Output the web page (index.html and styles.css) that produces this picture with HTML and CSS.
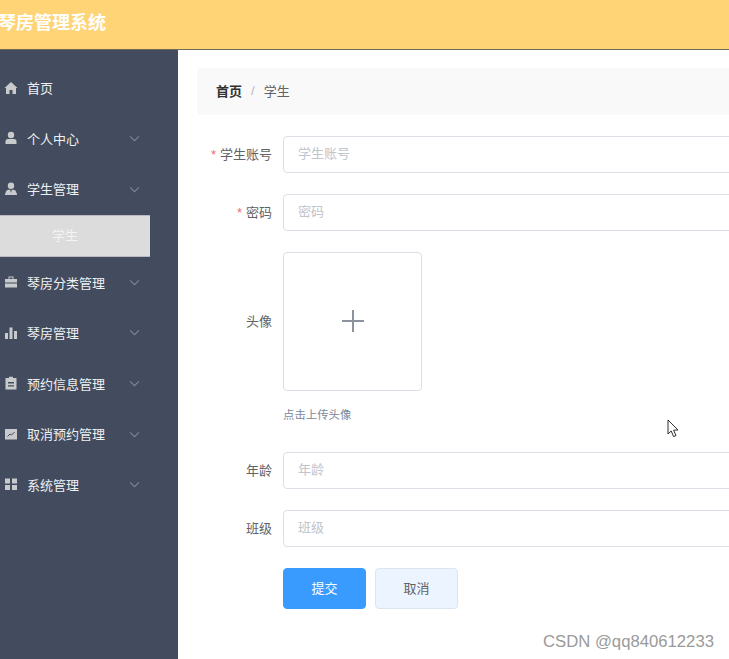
FILE: index.html
```html
<!DOCTYPE html>
<html lang="zh-CN">
<head>
    <meta charset="UTF-8">
    <meta name="viewport" content="width=device-width, initial-scale=1.0">
    <title>琴房管理系统</title>
    <link rel="stylesheet" href="styles.css">
</head>
<body>
    <header class="topbar">
        <h1 class="logo">琴房管理系统</h1>
    </header>

    <div class="layout">
        <aside class="sidebar">
            <ul class="menu">
                <li class="menu-item">
                    <svg class="menu-icon" viewBox="0 0 14 14"><path d="M7 1 L13.5 7 L12 7 L12 13 L8.5 13 L8.5 9 L5.5 9 L5.5 13 L2 13 L2 7 L0.5 7 Z"/></svg>
                    <span class="menu-text">首页</span>
                </li>
                <li class="menu-item">
                    <svg class="menu-icon" viewBox="0 0 14 14"><circle cx="7" cy="4" r="3.2"/><path d="M1.5 13 V10.5 Q1.5 8 4 8 H10 Q12.5 8 12.5 10.5 V13 Z"/></svg>
                    <span class="menu-text">个人中心</span>
                    <svg class="arrow" viewBox="0 0 10 6"><path d="M1 1 L5 5 L9 1"/></svg>
                </li>
                <li class="menu-item">
                    <svg class="menu-icon" viewBox="0 0 14 14"><circle cx="7" cy="3.8" r="3.2"/><path d="M0.8 13 L2 9.5 Q2.6 7.8 4.5 7.8 L6.2 7.8 L7 11 L7.8 7.8 L9.5 7.8 Q11.4 7.8 12 9.5 L13.2 13 Z"/></svg>
                    <span class="menu-text">学生管理</span>
                    <svg class="arrow" viewBox="0 0 10 6"><path d="M1 1 L5 5 L9 1"/></svg>
                </li>
                <li class="submenu-item">学生</li>
                <li class="menu-item">
                    <svg class="menu-icon" viewBox="0 0 14 14"><path d="M4.5 4 V1.5 H9.5 V4 H8.5 V2.5 H5.5 V4 Z"/><path d="M1 4 H13 V7.5 H1 Z"/><path d="M1 8.5 H13 V12.5 H1 Z"/></svg>
                    <span class="menu-text">琴房分类管理</span>
                    <svg class="arrow" viewBox="0 0 10 6"><path d="M1 1 L5 5 L9 1"/></svg>
                </li>
                <li class="menu-item">
                    <svg class="menu-icon" viewBox="0 0 14 14"><path d="M1 7 H4 V13 H1 Z"/><path d="M5.5 1.5 H8.5 V13 H5.5 Z"/><path d="M10 5 H13 V13 H10 Z"/></svg>
                    <span class="menu-text">琴房管理</span>
                    <svg class="arrow" viewBox="0 0 10 6"><path d="M1 1 L5 5 L9 1"/></svg>
                </li>
                <li class="menu-item">
                    <svg class="menu-icon" viewBox="0 0 14 14"><path fill-rule="evenodd" d="M5 0.8 H9 V2 H12.5 V13.5 H1.5 V2 H5 Z M4 6 V7.4 H10 V6 Z M4 9.2 V10.6 H10 V9.2 Z"/></svg>
                    <span class="menu-text">预约信息管理</span>
                    <svg class="arrow" viewBox="0 0 10 6"><path d="M1 1 L5 5 L9 1"/></svg>
                </li>
                <li class="menu-item">
                    <svg class="menu-icon" viewBox="0 0 14 14"><path d="M1 2 H13 V12.5 H1 Z"/><path class="icon-cut" d="M3.5 9.5 L6 7 L7.5 8 L10.5 5"/></svg>
                    <span class="menu-text">取消预约管理</span>
                    <svg class="arrow" viewBox="0 0 10 6"><path d="M1 1 L5 5 L9 1"/></svg>
                </li>
                <li class="menu-item">
                    <svg class="menu-icon" viewBox="0 0 14 14"><path d="M1 1.5 H6 V6.5 H1 Z"/><path d="M8 1.5 H13 V6.5 H8 Z"/><path d="M1 8 H6 V13 H1 Z"/><path d="M8 8 H13 V13 H8 Z"/></svg>
                    <span class="menu-text">系统管理</span>
                    <svg class="arrow" viewBox="0 0 10 6"><path d="M1 1 L5 5 L9 1"/></svg>
                </li>
            </ul>
        </aside>

        <main class="main">
            <div class="breadcrumb">
                <span class="crumb-home">首页</span>
                <span class="crumb-sep">/</span>
                <span class="crumb-current">学生</span>
            </div>

            <form class="form">
                <div class="form-row">
                    <label class="form-label"><span class="required">*</span>学生账号</label>
                    <input class="form-input" type="text" placeholder="学生账号">
                </div>
                <div class="form-row">
                    <label class="form-label"><span class="required">*</span>密码</label>
                    <input class="form-input" type="text" placeholder="密码">
                </div>
                <div class="form-row upload-row">
                    <label class="form-label">头像</label>
                    <div class="upload-box">
                        <svg class="upload-plus" viewBox="0 0 22 22"><path d="M0 11 H22 M11 0 V22"/></svg>
                    </div>
                </div>
                <p class="upload-tip">点击上传头像</p>
                <div class="form-row">
                    <label class="form-label">年龄</label>
                    <input class="form-input" type="text" placeholder="年龄">
                </div>
                <div class="form-row">
                    <label class="form-label">班级</label>
                    <input class="form-input" type="text" placeholder="班级">
                </div>
                <div class="form-actions">
                    <button class="btn btn-primary" type="button">提交</button>
                    <button class="btn btn-cancel" type="button">取消</button>
                </div>
            </form>
        </main>
    </div>

    <svg class="cursor" viewBox="0 0 13 19"><path d="M1 1 V15 L4.2 12 L6.6 17.6 L9 16.6 L6.6 11.2 L11 11 Z"/></svg>
    <div class="watermark">CSDN @qq840612233</div>
</body>
</html>
```

FILE: styles.css
```css
* { box-sizing: border-box; }
html, body { height: 100%; }
body { margin: 0; position: relative; overflow: hidden; background: #fff; font-family: "Liberation Sans", "Noto Sans CJK SC", sans-serif; font-size: 13px; color: #606266; }

.topbar { height: 50px; background: #ffd476; border-bottom: 1px solid #6f6a5a; display: flex; align-items: center; }
.logo { margin: 0 0 7px -2px; font-size: 18px; font-weight: bold; color: #fff; white-space: nowrap; }

.layout { display: flex; height: 609px; }
.sidebar { width: 178px; flex-shrink: 0; background: #434c5e; }
.menu { list-style: none; margin: 0; padding: 12.5px 0 0; }
.menu-item { height: 50.6px; display: flex; align-items: center; padding-left: 4px; color: #eef0f3; position: relative; }
.menu-icon { width: 14px; height: 14px; fill: #c9cacc; flex-shrink: 0; }
.icon-cut { fill: none; stroke: #434c5e; stroke-width: 1; }
.menu-text { margin-left: 9px; white-space: nowrap; }
.arrow { position: absolute; left: 129px; top: 22px; width: 11px; height: 7px; fill: none; stroke: #7e8695; stroke-width: 1; }
.submenu-item { width: 150px; height: 42px; margin-top: 0.5px; background: #dcdcdc; color: #f4f4f4; text-align: center; line-height: 40px; padding-right: 20px; border-top: 1px solid #b9bbc0; border-bottom: 1px solid #b9bbc0; }

.main { flex: 1; min-width: 0; overflow: hidden; padding: 18px 0 0 19px; }
.breadcrumb { width: 600px; height: 47px; background: #f9f9f9; border-radius: 4px; padding: 0 0 2px 19px; display: flex; align-items: center; gap: 9px; }
.crumb-home { color: #303133; font-weight: bold; }
.crumb-sep { color: #b4b8bf; }
.crumb-current { color: #606266; }

.form { width: 640px; padding-top: 21px; }
.form-row { display: flex; align-items: center; margin-bottom: 21px; }
.form-label { width: 86px; padding: 0 11px 2px 0; text-align: right; white-space: nowrap; flex-shrink: 0; color: #606266; }
.required { color: #f56c6c; margin-right: 4px; }
.form-input { flex: 1; height: 37px; padding: 0 14px 2px; border: 1px solid #dcdfe6; border-radius: 4px; font: inherit; color: #606266; outline: none; }
.form-input::placeholder { color: #c0c4cc; }

.upload-row { margin-bottom: 0; }
.upload-box { width: 139px; height: 139px; padding-bottom: 2px; border: 1px solid #dcdfe6; border-radius: 4px; display: flex; align-items: center; justify-content: center; }
.upload-plus { width: 22px; height: 22px; fill: none; stroke: #8c939d; stroke-width: 2; }
.upload-tip { margin: 15px 0 0 86px; height: 46px; font-size: 11.4px; line-height: 18px; color: #7d8899; }

.form-actions { display: flex; gap: 9px; padding-left: 86px; }
.btn { width: 83px; height: 41px; padding-bottom: 3px; border-radius: 4px; font: inherit; cursor: pointer; }
.btn-primary { background: #3a9bff; border: 1px solid #3a9bff; color: #fff; }
.btn-cancel { background: #ecf5ff; border: 1px solid #d9e6f2; color: #606266; }

.cursor { position: absolute; left: 667px; top: 419px; width: 13px; height: 19px; fill: #fff; stroke: #2b2f36; stroke-width: 1; }
.watermark { position: absolute; left: 543px; top: 632px; font-size: 16.7px; color: #9a9a9a; white-space: nowrap; }
```
